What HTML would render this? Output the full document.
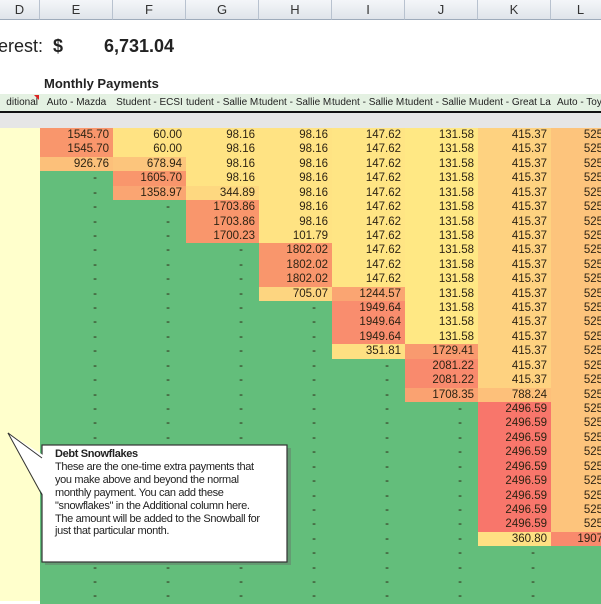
<!DOCTYPE html>
<html><head><meta charset="utf-8">
<style>
html,body{margin:0;padding:0;width:601px;height:601px;overflow:hidden;background:#fff;font-family:"Liberation Sans",sans-serif;}
.a{position:absolute;box-sizing:border-box;}
.colh{top:0;height:20px;background:linear-gradient(#f4f6f9,#dfe4ea);border-right:1px solid #b8c2cf;border-bottom:1px solid #9eabbb;text-align:center;font-size:13px;line-height:20px;color:#333;}
.lbl{top:95px;height:16px;font-size:10px;line-height:16px;color:#222;overflow:hidden;white-space:nowrap;text-align:center;}
.c{font-size:11.5px;line-height:14.45px;text-align:right;padding-right:4px;color:#2e2414;white-space:nowrap;overflow:hidden;}
</style></head><body>
<div class="a colh" style="left:0;width:40px">D</div>
<div class="a colh" style="left:40px;width:73px">E</div>
<div class="a colh" style="left:113px;width:73px">F</div>
<div class="a colh" style="left:186px;width:73px">G</div>
<div class="a colh" style="left:259px;width:73px">H</div>
<div class="a colh" style="left:332px;width:73px">I</div>
<div class="a colh" style="left:405px;width:73px">J</div>
<div class="a colh" style="left:478px;width:73px">K</div>
<div class="a colh" style="left:551px;width:60px">L</div>

<div class="a" style="left:-2px;top:36px;font-size:18px;color:#222">erest:</div>
<div class="a" style="left:53px;top:36px;font-size:18px;font-weight:bold;color:#222">$</div>
<div class="a" style="left:104px;top:36px;font-size:18px;font-weight:bold;color:#222">6,731.04</div>
<div class="a" style="left:44px;top:76px;font-size:13px;font-weight:bold;color:#222">Monthly Payments</div>

<div class="a" style="left:0;top:94px;width:601px;height:17px;background:#e4f1e2"></div>
<div class="a lbl" style="left:0;width:38px;text-align:right">ditional</div>
<div class="a" style="left:34px;top:95px;width:0;height:0;border-top:5px solid #d22;border-left:5px solid transparent"></div>
<div class="a lbl" style="left:40px;width:73px">Auto - Mazda</div>
<div class="a lbl" style="left:113px;width:73px">Student - ECSI</div>
<div class="a lbl" style="left:186px;width:73px">tudent - Sallie Ma</div>
<div class="a lbl" style="left:259px;width:73px">tudent - Sallie Ma</div>
<div class="a lbl" style="left:332px;width:73px">tudent - Sallie Ma</div>
<div class="a lbl" style="left:405px;width:73px">tudent - Sallie Ma</div>
<div class="a lbl" style="left:478px;width:73px">udent - Great Lak</div>
<div class="a lbl" style="left:551px;width:60px;text-align:left;padding-left:6px">Auto - Toy</div>
<div class="a" style="left:0;top:111px;width:601px;height:2px;background:#111"></div>
<div class="a" style="left:0;top:113px;width:601px;height:15px;background:#e6e6e6"></div>
<div class="a" style="left:0;top:128px;width:40px;height:473px;background:#ffffcc"></div>
<div id="g"></div>

<svg class="a" style="left:0;top:425px" width="300" height="150">
<polygon points="49,67 8,8 52,48" fill="#fff" stroke="#333" stroke-width="1"/>
<rect x="45" y="23" width="246" height="117" fill="#666" opacity="0.4"/>
<rect x="42" y="20" width="245" height="117" fill="#fff" stroke="#333" stroke-width="1.2"/>
<polygon points="43,30 8,8 43,70" fill="#fff"/>
<polyline points="42,33 8,8 42,70" fill="none" stroke="#333" stroke-width="1"/>
</svg>
<div class="a" style="left:55px;top:448px;width:234px;font-size:11px;line-height:12.9px;color:#222;letter-spacing:-0.35px;white-space:nowrap">
<b>Debt Snowflakes</b><br>These are the one-time extra payments that<br>you make above and beyond the normal<br>monthly payment. You can add these<br>"snowflakes" in the Additional column here.<br>The amount will be added to the Snowball for<br>just that particular month.</div>

<script>
var Y='#ffe383',S='#f9966c',G='#63be7b',R='#f8766b';
function col(i){
 var E,F,Gc,H,I,J,K,L;
 E=i<2?['1545.70',S]:i==2?['926.76','#fcc07a']:['-',G];
 F=i<2?['60.00',Y]:i==2?['678.94','#fcc57c']:i==3?['1605.70',S]:i==4?['1358.97','#faa572']:['-',G];
 Gc=i<4?['98.16',Y]:i==4?['344.89','#fed880']:i<7?['1703.86',S]:i==7?['1700.23',S]:['-',G];
 H=i<7?['98.16',Y]:i==7?['101.79',Y]:i<11?['1802.02',S]:i==11?['705.07','#fdd580']:['-',G];
 I=i<11?['147.62','#ffe584']:i==11?['1244.57','#faa572']:i<15?['1949.64','#f98d6e']:i==15?['351.81','#fee082']:['-',G];
 J=i<15?['131.58','#ffe884']:i==15?['1729.41','#f99a6f']:i<18?['2081.22','#f98a6d']:i==18?['1708.35','#faa271']:['-',G];
 K=i<18?['415.37','#fed280']:i==18?['788.24','#fdc07a']:i<28?['2496.59',R]:i==28?['360.80','#ffe083']:['-',G];
 L=i<28?['525.00','#fdc47c']:i==28?['1907.00','#f98a6d']:['',G];
 return [E,F,Gc,H,I,J,K,L];
}
var h='',xs=[40,113,186,259,332,405,478,551],ws=[73,73,73,73,73,73,73,72];
for(var i=0;i<33;i++){var t=128+i*14.42,c=col(i);
 for(var j=0;j<8;j++){h+='<div class="a c" style="left:'+xs[j]+'px;top:'+t+'px;width:'+ws[j]+'px;height:14.5px;background:'+c[j][1]+';'+(c[j][0]=='-'?'padding-right:16px;':'')+'">'+c[j][0]+'</div>';}}
document.getElementById('g').innerHTML=h;
</script>
</body></html>
